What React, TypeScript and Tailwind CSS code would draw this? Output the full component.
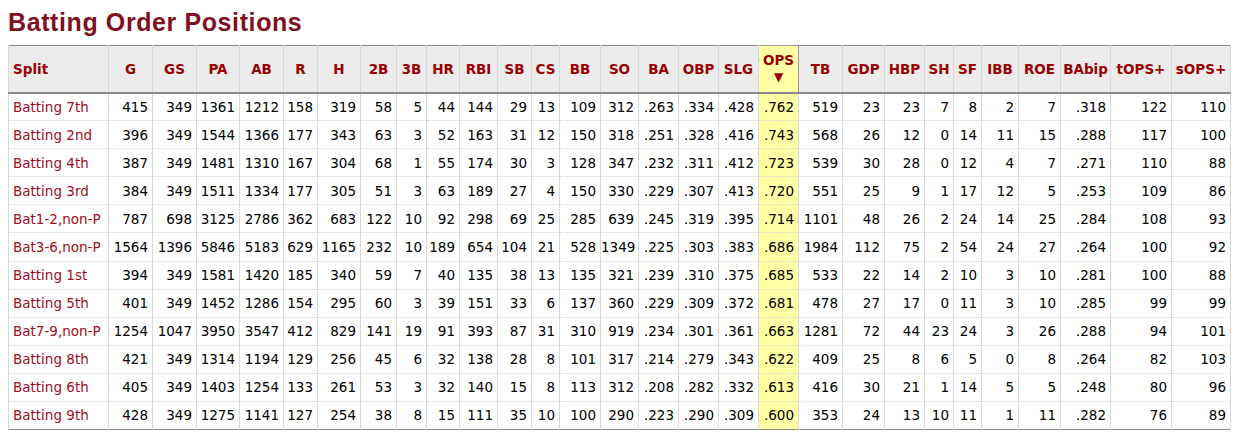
import React from 'react';

const cols: { key: string; w: number }[] = [
  { key: 'Split', w: 100 },
  { key: 'G', w: 44 },
  { key: 'GS', w: 44 },
  { key: 'PA', w: 43 },
  { key: 'AB', w: 44 },
  { key: 'R', w: 34 },
  { key: 'H', w: 43 },
  { key: '2B', w: 36 },
  { key: '3B', w: 30 },
  { key: 'HR', w: 33 },
  { key: 'RBI', w: 38 },
  { key: 'SB', w: 34 },
  { key: 'CS', w: 28 },
  { key: 'BB', w: 41 },
  { key: 'SO', w: 38 },
  { key: 'BA', w: 40 },
  { key: 'OBP', w: 40 },
  { key: 'SLG', w: 40 },
  { key: 'OPS', w: 40 },
  { key: 'TB', w: 44 },
  { key: 'GDP', w: 42 },
  { key: 'HBP', w: 40 },
  { key: 'SH', w: 29 },
  { key: 'SF', w: 28 },
  { key: 'IBB', w: 37 },
  { key: 'ROE', w: 42 },
  { key: 'BAbip', w: 50 },
  { key: 'tOPS+', w: 61 },
  { key: 'sOPS+', w: 59 },
];

const rows: string[][] = [
  ['Batting 7th', '415', '349', '1361', '1212', '158', '319', '58', '5', '44', '144', '29', '13', '109', '312', '.263', '.334', '.428', '.762', '519', '23', '23', '7', '8', '2', '7', '.318', '122', '110'],
  ['Batting 2nd', '396', '349', '1544', '1366', '177', '343', '63', '3', '52', '163', '31', '12', '150', '318', '.251', '.328', '.416', '.743', '568', '26', '12', '0', '14', '11', '15', '.288', '117', '100'],
  ['Batting 4th', '387', '349', '1481', '1310', '167', '304', '68', '1', '55', '174', '30', '3', '128', '347', '.232', '.311', '.412', '.723', '539', '30', '28', '0', '12', '4', '7', '.271', '110', '88'],
  ['Batting 3rd', '384', '349', '1511', '1334', '177', '305', '51', '3', '63', '189', '27', '4', '150', '330', '.229', '.307', '.413', '.720', '551', '25', '9', '1', '17', '12', '5', '.253', '109', '86'],
  ['Bat1-2,non-P', '787', '698', '3125', '2786', '362', '683', '122', '10', '92', '298', '69', '25', '285', '639', '.245', '.319', '.395', '.714', '1101', '48', '26', '2', '24', '14', '25', '.284', '108', '93'],
  ['Bat3-6,non-P', '1564', '1396', '5846', '5183', '629', '1165', '232', '10', '189', '654', '104', '21', '528', '1349', '.225', '.303', '.383', '.686', '1984', '112', '75', '2', '54', '24', '27', '.264', '100', '92'],
  ['Batting 1st', '394', '349', '1581', '1420', '185', '340', '59', '7', '40', '135', '38', '13', '135', '321', '.239', '.310', '.375', '.685', '533', '22', '14', '2', '10', '3', '10', '.281', '100', '88'],
  ['Batting 5th', '401', '349', '1452', '1286', '154', '295', '60', '3', '39', '151', '33', '6', '137', '360', '.229', '.309', '.372', '.681', '478', '27', '17', '0', '11', '3', '10', '.285', '99', '99'],
  ['Bat7-9,non-P', '1254', '1047', '3950', '3547', '412', '829', '141', '19', '91', '393', '87', '31', '310', '919', '.234', '.301', '.361', '.663', '1281', '72', '44', '23', '24', '3', '26', '.288', '94', '101'],
  ['Batting 8th', '421', '349', '1314', '1194', '129', '256', '45', '6', '32', '138', '28', '8', '101', '317', '.214', '.279', '.343', '.622', '409', '25', '8', '6', '5', '0', '8', '.264', '82', '103'],
  ['Batting 6th', '405', '349', '1403', '1254', '133', '261', '53', '3', '32', '140', '15', '8', '113', '312', '.208', '.282', '.332', '.613', '416', '30', '21', '1', '14', '5', '5', '.248', '80', '96'],
  ['Batting 9th', '428', '349', '1275', '1141', '127', '254', '38', '8', '15', '111', '35', '10', '100', '290', '.223', '.290', '.309', '.600', '353', '24', '13', '10', '11', '1', '11', '.282', '76', '89'],
];

const OPS = 18;

export default function App() {
  return (
    <div className="bg-white px-2 pt-[7px] font-['DejaVu_Sans',Verdana,sans-serif] text-[13.5px] text-black">
      <h2 className="mb-[8px] font-['Liberation_Sans',Arial,sans-serif] text-[25px] font-bold leading-[30px] tracking-[0.6px] text-[#800f1f]">
        Batting Order Positions
      </h2>
      <table className="w-[1223px] table-fixed border-collapse border border-[#8a8a8a]">
        <colgroup>
          {cols.map((c) => (
            <col key={c.key} style={{ width: c.w }} />
          ))}
        </colgroup>
        <thead>
          <tr className="h-[47px] border-b-2 border-[#8a8a8a] bg-[#ececec]">
            {cols.map((c, i) =>
              i === OPS ? (
                <th
                  key={c.key}
                  className="border border-[#999] bg-[#ffffa6] px-0 text-center font-bold leading-[17px] text-[#990000]"
                >
                  <div>OPS</div>
                  <div className="text-[12px]">▼</div>
                </th>
              ) : (
                <th
                  key={c.key}
                  className={
                    i === 0
                      ? 'border-x border-[#d8d8d8] px-1 text-left font-bold text-[#990000]'
                      : 'border-x border-[#d8d8d8] px-0 text-center font-bold text-[#990000]'
                  }
                >
                  {c.key}
                </th>
              )
            )}
          </tr>
        </thead>
        <tbody>
          {rows.map((r, ri) => (
            <tr
              key={r[0]}
              className={ri < rows.length - 1 ? 'h-[28.1px] border-b border-dotted border-[#d6d6d6]' : 'h-[28.1px]'}
            >
              {r.map((v, i) =>
                i === 0 ? (
                  <td key={i} className="whitespace-nowrap border-x border-[#d8d8d8] px-1 text-left text-[#a00d1a]">
                    {v}
                  </td>
                ) : (
                  <td
                    key={i}
                    className={
                      i === OPS
                        ? 'whitespace-nowrap border-x border-[#d8d8d8] bg-[#ffffa6] pr-[4px] text-right'
                        : 'whitespace-nowrap border-x border-[#d8d8d8] pr-[4px] text-right'
                    }
                  >
                    {v}
                  </td>
                )
              )}
            </tr>
          ))}
        </tbody>
      </table>
    </div>
  );
}
